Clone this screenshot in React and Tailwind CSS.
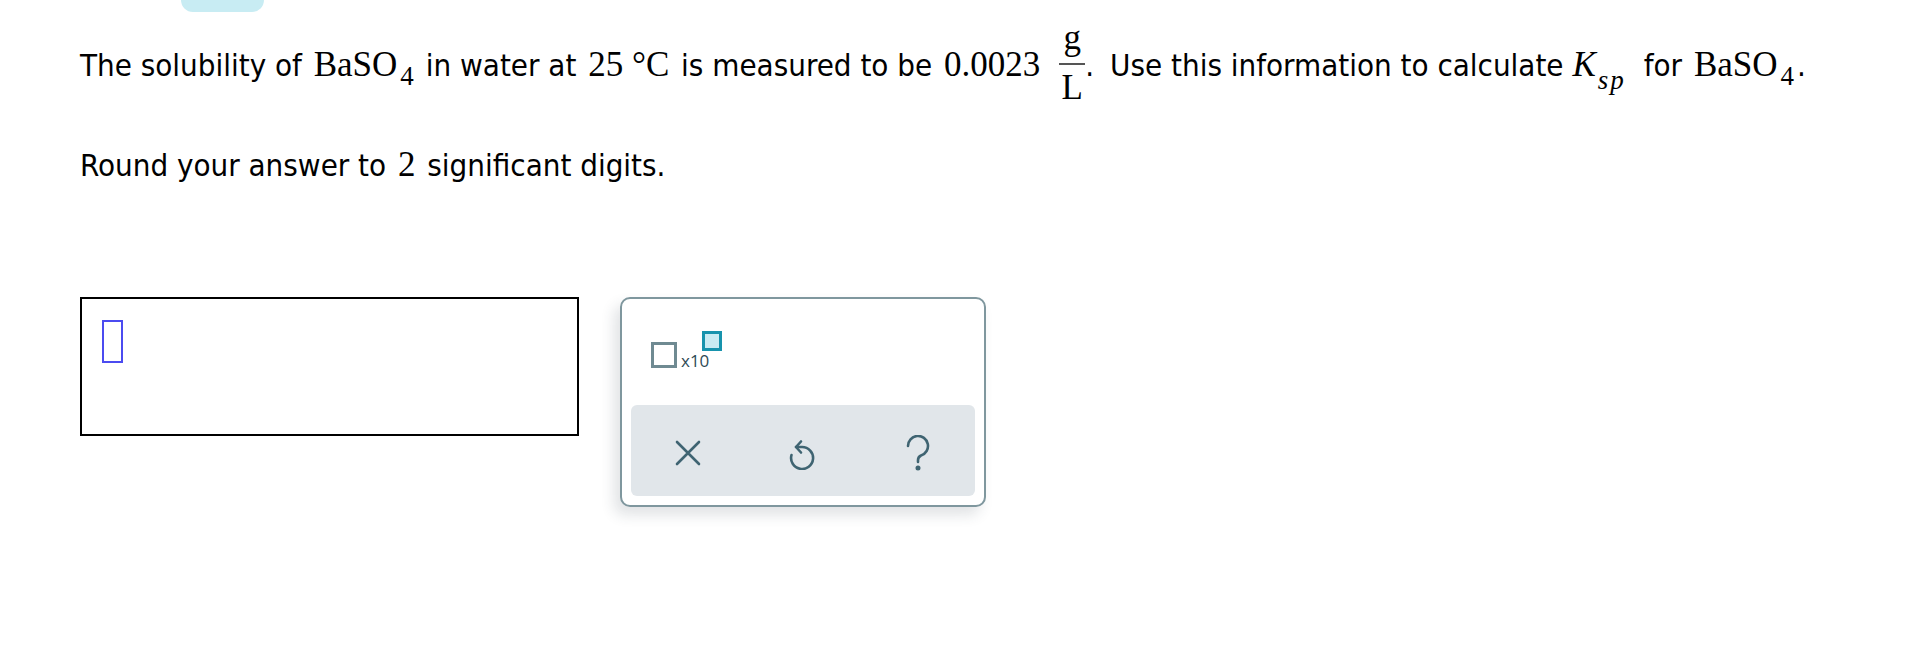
import React from 'react'

const serif = { fontFamily: '"Liberation Serif", "Times New Roman", serif' }

function M({ children, italic }) {
  return (
    <span className={`text-[35px] ${italic ? 'italic' : 'mx-[3px]'}`} style={serif}>
      {children}
    </span>
  )
}

function BaSO4() {
  return (
    <span className="mx-[3px] whitespace-nowrap">
      <span className="text-[35px]" style={serif}>BaSO</span>
      <span className="relative top-[9px] ml-[3px] text-[27px]" style={serif}>4</span>
    </span>
  )
}

function Fraction() {
  return (
    <span className="relative -top-[5px] -my-[14px] ml-[16px] mr-[12px] inline-flex flex-col items-center align-middle" style={serif}>
      <span className="text-[35px] leading-[32px]">g</span>
      <span className="mt-[9px] mb-[8px] h-[2px] w-[26px] bg-[#555]" />
      <span className="text-[35px] leading-[30px]">L</span>
    </span>
  )
}

function UndoIcon() {
  return (
    <svg width="34" height="34" viewBox="0 0 34 34" fill="none" stroke="#3f6472" strokeWidth="2.6" strokeLinecap="round" strokeLinejoin="round">
      <path d="M10 11 H16 A11 11 0 1 1 5.5 19" />
      <path d="M15 5.5 L10 11 L15 16.5" />
    </svg>
  )
}

function HelpIcon() {
  return (
    <svg width="26" height="36" viewBox="0 0 26 36" fill="none" stroke="#3f6472" strokeWidth="2.6" strokeLinecap="round" strokeLinejoin="round">
      <path d="M3 11 A10 10 0 1 1 16 20.5 C14 21.5 13 23 13 25 V27" />
      <circle cx="13" cy="33" r="1.2" fill="#3f6472" />
    </svg>
  )
}

function CloseIcon() {
  return (
    <svg width="26" height="26" viewBox="0 0 26 26" fill="none" stroke="#3f6472" strokeWidth="2.6" strokeLinecap="round">
      <path d="M2 2 L24 24 M24 2 L2 24" />
    </svg>
  )
}

export default function App() {
  return (
    <div
      className="min-h-screen bg-white pl-[80px] text-black"
      style={{ fontFamily: '"DejaVu Sans Condensed", "DejaVu Sans", Verdana, sans-serif' }}
    >
      {/* top tab */}
      <div className="ml-[101px] h-[12px] w-[83px] rounded-b-[12px] bg-[#c8ecf3]" />

      {/* question */}
      <p className="mt-[17px] text-[31px] leading-[72px]" style={{ fontStretch: 'condensed' }}>
        The solubility of <BaSO4 /> in water at <M>25 °C</M> is measured to be <M>0.0023</M>
        <Fraction />
        <span className="-ml-[12px]">.</span>
        <span className="ml-[16px]">Use this information to calculate </span>
        <M italic>K</M>
        <span className="relative top-[13px] ml-[2px] mr-[18px] text-[27px] italic tracking-[2px]" style={serif}>sp</span>
        for <BaSO4 />.
      </p>

      <p className="mt-[42px] text-[31px] leading-[40px]" style={{ fontStretch: 'condensed' }}>
        Round your answer to <M>2</M> significant digits.
      </p>

      {/* answer area */}
      <div className="mt-[112px] flex items-start gap-[41px]">
        <div className="h-[139px] w-[499px] border-2 border-black px-[20px] pt-[21px]">
          <div className="h-[43px] w-[21px] border-2 border-[#4b4bf0]" />
        </div>

        <div className="flex h-[210px] w-[366px] flex-col rounded-[10px] border-[2.5px] border-[#7f979e] bg-white px-[9px] pb-[9px] shadow-[-6px_8px_14px_rgba(40,60,70,0.14)]">
          <div className="flex h-[106px] items-start pl-[20px] pt-[32px]">
            <div className="mt-[11px] h-[26px] w-[26px] border-[3px] border-[#6f8a92]" />
            <span className="mt-[23px] ml-[4px] text-[17px] font-medium leading-[14px] text-[#2f4a55]" style={{ fontFamily: '"Open Sans", sans-serif' }}>x10</span>
            <div className="-ml-[7px] h-[20px] w-[20px] border-[3px] border-[#1793ad] bg-[#c9ebf3]" />
          </div>
          <div className="flex flex-1 items-center rounded-[6px] bg-[#e1e6ea]">
            <div className="flex flex-1 justify-center pt-[4px]"><CloseIcon /></div>
            <div className="flex flex-1 justify-center pt-[4px]"><UndoIcon /></div>
            <div className="flex flex-1 justify-center pt-[4px]"><HelpIcon /></div>
          </div>
        </div>
      </div>
    </div>
  )
}
